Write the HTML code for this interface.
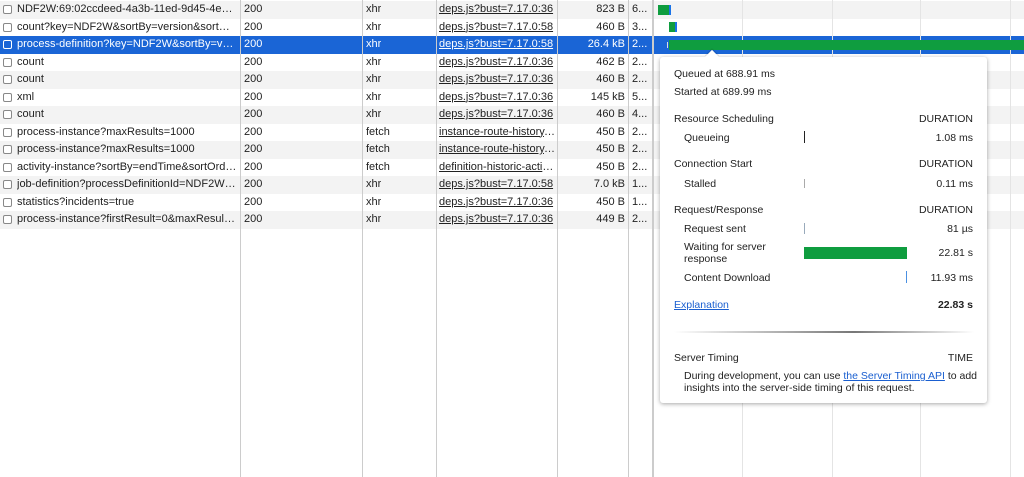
<!DOCTYPE html>
<html><head><style>
*{margin:0;padding:0;box-sizing:border-box}
body{width:1024px;height:477px;overflow:hidden;background:#fff;font-family:"Liberation Sans",Arial,sans-serif;font-size:11px;color:#222;position:relative}
.row{position:absolute;left:0;width:1024px;height:17.5px}
.g{background:#f3f3f3}
.sel{background:#1a65d6;color:#fff}
.c{position:absolute;top:0;height:17.5px;line-height:17.5px;white-space:nowrap;overflow:hidden;text-overflow:ellipsis}
.cb{position:absolute;left:3px;top:4px;width:9px;height:9px;border:1px solid #888;border-radius:2px;background:#fff}
.sel .cb{border-color:#fff;background:#1a65d6}
.u{text-decoration:underline}
.vl{position:absolute;top:0;height:477px;width:1px;background:#ccc;z-index:2}
.wl{position:absolute;top:0;height:477px;width:1px;background:#e4e4e4;z-index:1}
.pop{position:absolute;left:660px;top:57px;width:327px;height:346px;background:#fff;border-radius:3px;box-shadow:0 1px 4px rgba(0,0,0,.35);font-size:10.5px;color:#222;z-index:5}
.p{position:absolute;white-space:nowrap}
.r{right:14px;text-align:right}
.bar{position:absolute;z-index:3}
</style></head><body>
<div class="vl" style="left:240px"></div>
<div class="vl" style="left:362px"></div>
<div class="vl" style="left:436px"></div>
<div class="vl" style="left:557px"></div>
<div class="vl" style="left:628px"></div>
<div class="vl" style="left:652px;width:2px"></div>
<div class="wl" style="left:742px"></div>
<div class="wl" style="left:832px"></div>
<div class="wl" style="left:920px"></div>
<div class="wl" style="left:1010px"></div>

<div id="rows"></div>
<script>
var d=[["NDF2W:69:02ccdeed-4a3b-11ed-9d45-4e435a6b7c8d","xhr","deps.js?bust=7.17.0:36","823 B","6..."],
["count?key=NDF2W&sortBy=version&sortOrder=desc","xhr","deps.js?bust=7.17.0:58","460 B","3..."],
["process-definition?key=NDF2W&sortBy=version&sortOrder","xhr","deps.js?bust=7.17.0:58","26.4 kB","2..."],
["count","xhr","deps.js?bust=7.17.0:36","462 B","2..."],
["count","xhr","deps.js?bust=7.17.0:36","460 B","2..."],
["xml","xhr","deps.js?bust=7.17.0:36","145 kB","5..."],
["count","xhr","deps.js?bust=7.17.0:36","460 B","4..."],
["process-instance?maxResults=1000","fetch","instance-route-history.js?bust","450 B","2..."],
["process-instance?maxResults=1000","fetch","instance-route-history.js?bust","450 B","2..."],
["activity-instance?sortBy=endTime&sortOrder=desc","fetch","definition-historic-activities.js","450 B","2..."],
["job-definition?processDefinitionId=NDF2W%3A69","xhr","deps.js?bust=7.17.0:58","7.0 kB","1..."],
["statistics?incidents=true","xhr","deps.js?bust=7.17.0:36","450 B","1..."],
["process-instance?firstResult=0&maxResults=50","xhr","deps.js?bust=7.17.0:36","449 B","2..."]];
var h="";
d.forEach(function(r,i){
var cls=i==2?"row sel":(i%2==0?"row g":"row");
h+='<div class="'+cls+'" style="top:'+(1+i*17.5)+'px"><span class="cb"></span>'+
'<div class="c" style="left:17px;width:221px">'+r[0].replace(/&/g,"&amp;")+'</div>'+
'<div class="c" style="left:244px">200</div>'+
'<div class="c" style="left:366px">'+r[1]+'</div>'+
'<div class="c u" style="left:439px;width:116px">'+r[2]+'</div>'+
'<div class="c" style="left:560px;width:65px;text-align:right">'+r[3]+'</div>'+
'<div class="c" style="left:632px">'+r[4]+'</div></div>';
});
document.getElementById("rows").innerHTML=h;
</script>
<div class="bar" style="left:658px;top:5px;width:11px;height:10px;background:#0f9d3f"></div>
<div class="bar" style="left:669px;top:5px;width:2px;height:10px;background:#1a73e8"></div>
<div class="bar" style="left:669px;top:22px;width:6px;height:10px;background:#0f9d3f"></div>
<div class="bar" style="left:675px;top:22px;width:2px;height:10px;background:#1a73e8"></div>
<div class="bar" style="left:667px;top:42px;width:1px;height:6px;background:#ddd"></div>
<div class="bar" style="left:669px;top:40px;width:355px;height:10px;background:#0f9d3f"></div>

<div class="pop">
<div style="position:absolute;left:47px;top:-5px;width:10px;height:10px;background:#fff;transform:rotate(45deg);box-shadow:-1px -1px 1px rgba(0,0,0,.15)"></div>
<div class="p" style="left:14px;top:11px">Queued at 688.91 ms</div>
<div class="p" style="left:14px;top:29px">Started at 689.99 ms</div>
<div class="p" style="left:14px;top:56px">Resource Scheduling</div><div class="p r" style="top:56px">DURATION</div>
<div class="p" style="left:24px;top:75px">Queueing</div><div style="position:absolute;left:144px;top:74px;width:1px;height:12px;background:#222"></div><div class="p r" style="top:75px">1.08 ms</div>
<div class="p" style="left:14px;top:101px">Connection Start</div><div class="p r" style="top:101px">DURATION</div>
<div class="p" style="left:24px;top:121px">Stalled</div><div style="position:absolute;left:144px;top:122px;width:1px;height:9px;background:#aaa"></div><div class="p r" style="top:121px">0.11 ms</div>
<div class="p" style="left:14px;top:147px">Request/Response</div><div class="p r" style="top:147px">DURATION</div>
<div class="p" style="left:24px;top:166px">Request sent</div><div style="position:absolute;left:144px;top:166px;width:1px;height:11px;background:#9ab"></div><div class="p r" style="top:166px">81 µs</div>
<div class="p" style="left:24px;top:184px;line-height:12px">Waiting for server<br>response</div><div style="position:absolute;left:144px;top:190px;width:103px;height:12px;background:#0f9d3f"></div><div class="p r" style="top:190px">22.81 s</div>
<div class="p" style="left:24px;top:215px">Content Download</div><div style="position:absolute;left:246px;top:214px;width:1px;height:12px;background:#4a90e2"></div><div class="p r" style="top:215px">11.93 ms</div>
<div class="p" style="left:14px;top:242px;color:#1a5fd0;text-decoration:underline">Explanation</div><div class="p r" style="top:242px;font-weight:bold">22.83 s</div>
<div style="position:absolute;left:14px;top:274px;width:300px;height:2px;background:linear-gradient(90deg,#fff,#777 60%,#fff)"></div>
<div class="p" style="left:14px;top:295px">Server Timing</div><div class="p r" style="top:295px">TIME</div>
<div class="p" style="left:24px;top:313px;line-height:12px">During development, you can use <span style="color:#1a5fd0;text-decoration:underline">the Server Timing API</span> to add<br>insights into the server-side timing of this request.</div>
</div>
</body></html>
